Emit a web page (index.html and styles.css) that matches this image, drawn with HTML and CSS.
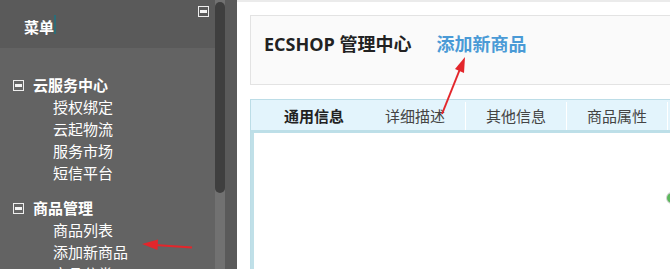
FILE: index.html
```html
<!DOCTYPE html>
<html lang="zh-CN">
<head>
    <meta charset="UTF-8">
    <title>ECSHOP 管理中心 - 添加新商品</title>
    <link rel="stylesheet" href="styles.css">
</head>
<body>

<div class="page">
    <aside class="sidebar">
        <div class="menu">
            <div class="menu-head">
                <span class="menu-title">菜单</span><span class="caret"></span>
                <span class="toggle head-toggle"></span>
            </div>
            <div class="menu-body">
                <div class="group">
                    <div class="group-title"><span class="toggle"></span>云服务中心</div>
                    <ul class="items">
                        <li>授权绑定</li>
                        <li>云起物流</li>
                        <li>服务市场</li>
                        <li>短信平台</li>
                    </ul>
                </div>
                <div class="group">
                    <div class="group-title"><span class="toggle"></span>商品管理</div>
                    <ul class="items">
                        <li>商品列表</li>
                        <li>添加新商品</li>
                        <li>商品分类</li>
                    </ul>
                </div>
            </div>
        </div>
        <div class="scrollbar"><div class="thumb"></div></div>
        <div class="frame-edge"></div>
    </aside>

    <main class="main">
        <div class="title-bar">
            <h1>ECSHOP 管理中心</h1>
            <span class="crumb">添加新商品</span>
        </div>
        <div class="tabs-box">
            <div class="tabs">
                <span class="tab active">通用信息</span>
                <span class="tab">详细描述</span>
                <span class="tab">其他信息</span>
                <span class="tab">商品属性</span>
            </div>
            <div class="tab-body">
                <span class="status-dot"></span>
            </div>
        </div>
    </main>

    <!-- annotation arrows -->
    <svg class="marks" width="670" height="269" viewBox="0 0 670 269">
        <line x1="442" y1="114" x2="460" y2="69" stroke="#e3262b" stroke-width="2"/>
        <polygon points="465,57 464,73 455,69" fill="#e3262b"/>
        <line x1="192" y1="247.5" x2="155" y2="245" stroke="#e3262b" stroke-width="2"/>
        <polygon points="142,244 158,239.5 157.5,250" fill="#e3262b"/>
    </svg>
</div>

</body>
</html>
```

FILE: styles.css
```css
body {
    margin: 0;
    padding: 0;
    font-family: "Open Sans", "Noto Sans CJK SC", sans-serif;
    background-color: #fff;
    overflow: hidden;
}
.page {
    position: relative;
    display: flex;
    width: 670px;
    height: 269px;
    overflow: hidden;
}
.sidebar {
    display: flex;
    flex: 0 0 237px;
    background-color: #636363;
}
.menu {
    width: 215px;
    color: #fff;
}
.menu-head {
    display: flex;
    height: 48px;
    padding: 0 6px 0 24px;
    background-color: #5a5a5a;
    box-sizing: border-box;
}
.menu-title {
    margin-top: 17px;
    font-size: 15px;
    line-height: 20px;
    font-weight: 700;
    height: 20px;
}
.caret {
    width: 2px;
    height: 19px;
    margin-top: 15px;
    background-color: #2b6d78;
}
.toggle {
    display: inline-flex;
    align-items: center;
    justify-content: center;
    width: 11px;
    height: 11px;
    border: 1px solid #eee;
    box-sizing: border-box;
    background-color: #666;
}
.toggle::after {
    content: "";
    width: 7px;
    height: 3px;
    background-color: #f4f4f4;
}
.head-toggle {
    margin: 6px 0 0 auto;
    background-color: #5a5a5a;
}
.menu-body {
    padding-top: 26px;
}
.group + .group {
    margin-top: 13px;
}
.group-title {
    display: flex;
    align-items: center;
    padding-left: 13px;
    font-size: 15px;
    line-height: 22px;
    font-weight: 700;
}
.group-title .toggle {
    margin-right: 9px;
}
.items {
    list-style: none;
    margin: 0;
    padding: 0 0 0 53px;
}
.items li {
    font-size: 15px;
    line-height: 22px;
}
.scrollbar {
    width: 10px;
    background-color: #717171;
}
.thumb {
    height: 191px;
    margin-top: 2px;
    border-radius: 5px;
    background-color: #3f3f3f;
}
.frame-edge {
    width: 12px;
    background-color: #5a5a5a;
}
.main {
    flex: 1;
    min-width: 0;
    border-top: 2px solid #ebebeb;
    padding: 13px 0 0 13px;
    overflow: hidden;
}
.title-bar {
    display: flex;
    align-items: center;
    height: 70px;
    margin-right: -20px;
    padding: 0 0 14px 13px;
    border: 1px solid #e3e3e3;
    background-color: #fafafa;
    box-sizing: border-box;
}
.title-bar h1 {
    margin: 0;
    font-size: 18px;
    font-weight: 700;
    color: #222;
}
.crumb {
    margin-left: 25px;
    font-size: 18px;
    font-weight: 700;
    color: #4a9ad6;
}
.tabs-box {
    margin: 14px -20px 0 0;
    border: 1px solid #bcdde7;
    border-bottom: none;
    height: 200px;
    display: flex;
    flex-direction: column;
}
.tabs {
    display: flex;
    height: 30px;
    padding-left: 13px;
    background-color: #e3f4fc;
    border-bottom: 3px solid #bddfe8;
}
.tab {
    width: 100px;
    margin-top: 2px;
    border-right: 1px solid #fff;
    text-align: center;
    font-size: 15px;
    line-height: 28px;
    color: #444;
}
.tab.active {
    font-weight: 700;
    color: #222;
    border-right-color: transparent;
}
.tab-body {
    position: relative;
    flex: 1;
    border-left: 3px solid #c0e0e8;
    background-color: #fff;
}
.status-dot {
    position: absolute;
    left: 413px;
    top: 60px;
    width: 10px;
    height: 10px;
    border-radius: 50%;
    background-color: #5cb85c;
    box-shadow: 0 0 0 1px #cfcfcf;
}
.marks {
    position: absolute;
    top: 0;
    left: 0;
    pointer-events: none;
}
```
